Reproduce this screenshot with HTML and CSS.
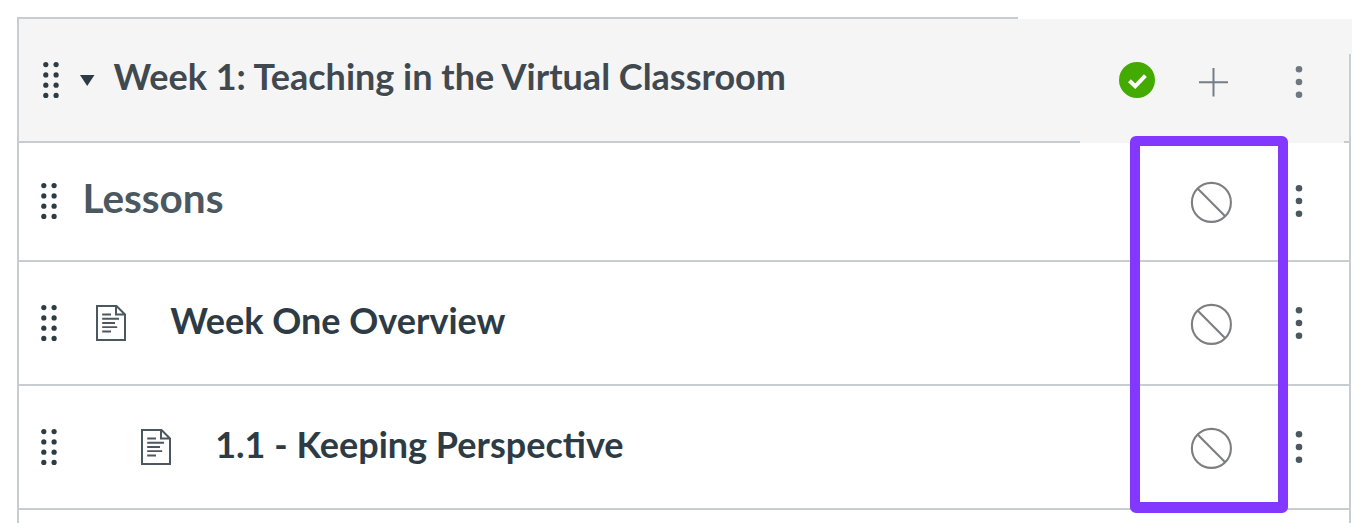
FILE: index.html
```html
<!DOCTYPE html>
<html lang="en">
<head>
<meta charset="utf-8">
<title>Modules</title>
<link rel="stylesheet" href="styles.css">
</head>
<body>
<svg class="defs" aria-hidden="true">
  <symbol id="drag" viewBox="0 0 16 36">
    <g fill="#2d3b45"><circle cx="2.8" cy="2.6" r="2.6"/><circle cx="13.1" cy="2.6" r="2.6"/><circle cx="2.8" cy="12.9" r="2.6"/><circle cx="13.1" cy="12.9" r="2.6"/><circle cx="2.8" cy="23.2" r="2.6"/><circle cx="13.1" cy="23.2" r="2.6"/><circle cx="2.8" cy="33.4" r="2.6"/><circle cx="13.1" cy="33.4" r="2.6"/></g>
  </symbol>
  <symbol id="more" viewBox="0 0 8 34">
    <g fill="currentColor"><circle cx="4" cy="4.2" r="3.3"/><circle cx="4" cy="17" r="3.3"/><circle cx="4" cy="29.7" r="3.3"/></g>
  </symbol>
  <symbol id="page" viewBox="0 0 30 36">
    <path d="M1 1H20.5L29 9.5V35H1ZM20 1V9.5H29" fill="none" stroke="#4b5860" stroke-width="2"/>
    <path d="M6.2 9.5H15M6.2 13.8H23M6.2 18H19M6.2 22.1H21.2M6.2 26.5H15" stroke="#4b5860" stroke-width="1.9"/>
  </symbol>
  <symbol id="unpublished" viewBox="0 0 42 42">
    <g fill="none" stroke="#7d7e80" stroke-width="2.1"><circle cx="21.4" cy="21.4" r="19.5"/><path d="M7.6 7.6L35.2 35.2"/></g>
  </symbol>
</svg>
<main class="module">
  <header class="row header">
    <svg class="drag"><use href="#drag"/></svg>
    <svg class="caret" viewBox="0 0 15 11"><path d="M0 0H14.5L7.2 11Z" fill="#2d3b45"/></svg>
    <h2 class="title">Week 1: Teaching in the Virtual Classroom</h2>
    <svg class="published" viewBox="0 0 36 36"><circle cx="18" cy="18" r="18" fill="#43ab00"/><path d="M10.4 18.8L16.2 24.3L26.4 13.7" fill="none" stroke="#fff" stroke-width="4"/></svg>
    <svg class="plus" viewBox="0 0 29 29"><path d="M0 14.2H29M14.5 0V28.5" stroke="#747e86" stroke-width="2"/></svg>
    <svg class="more"><use href="#more"/></svg>
  </header>
  <section class="row lessons">
    <svg class="drag"><use href="#drag"/></svg>
    <h3 class="title">Lessons</h3>
    <svg class="status"><use href="#unpublished"/></svg>
    <svg class="more"><use href="#more"/></svg>
  </section>
  <section class="row item">
    <svg class="drag"><use href="#drag"/></svg>
    <svg class="page"><use href="#page"/></svg>
    <span class="title">Week One Overview</span>
    <svg class="status"><use href="#unpublished"/></svg>
    <svg class="more"><use href="#more"/></svg>
  </section>
  <section class="row item nested">
    <svg class="drag"><use href="#drag"/></svg>
    <svg class="page"><use href="#page"/></svg>
    <span class="title">1.1 - Keeping Perspective</span>
    <svg class="status"><use href="#unpublished"/></svg>
    <svg class="more"><use href="#more"/></svg>
  </section>
  <div class="next"></div>
  <div class="highlight"></div>
</main>
</body>
</html>
```
FILE: styles.css
```css
* { box-sizing: border-box; }
body { margin: 0; background: #fff; color: #2d3b45; font-family: Lato, sans-serif; overflow: hidden; }
.defs { display: block; width: 0; height: 0; }
svg { flex: none; display: block; }
.module { position: relative; width: 1335px; height: 506px; margin: 17px 0 0 17px; border-left: 2px solid #c7cdd1; }
.row { display: flex; align-items: flex-start; width: 1332px; border-right: 2px solid #c7cdd1; border-bottom: 2px solid #c7cdd1; }
.header {
  width: 1333px; height: 126px; border: 0;
  background:
    linear-gradient(#c7cdd1, #c7cdd1) 0 0 / 999px 2px no-repeat,
    linear-gradient(#fff, #fff) 999px 0 / 334px 2px no-repeat,
    linear-gradient(#c7cdd1, #c7cdd1) 0 124px / 1061px 2px no-repeat,
    linear-gradient(#c7cdd1, #c7cdd1) 1325px 124px / 6px 2px no-repeat,
    linear-gradient(#c7cdd1, #c7cdd1) 1330px 37px / 2px 89px no-repeat,
    linear-gradient(#fff, #fff) 1332px 37px / 1px 89px no-repeat,
    #f5f5f5;
}
.drag { width: 16px; height: 36px; margin: 40px 0 0 22px; }
.more { width: 8px; height: 34px; color: #4b5860; }
.status { width: 42px; height: 42px; margin-right: 63px; }
.title { margin: 0; flex: 1; font-weight: 700; white-space: nowrap; font-size: 36px; line-height: 44px; }
.header .drag { margin: 45px 0 0 24px; }
.caret { width: 15px; height: 11px; margin: 58px 18.6px 0 21px; }
.header .title { color: #414950; text-shadow: 0 1px 0 #fff; margin-top: 37px; }
.published { width: 36px; height: 36px; margin: 45px 44px 0 0; }
.plus { width: 29px; height: 29px; margin: 51px 67px 0 0; }
.header .more { margin: 48px 50px 0 0; color: #6d7880; }
.lessons { height: 119px; }
.lessons .title { font-size: 40.5px; color: #4b5860; margin: 32px 0 0 25.4px; line-height: 46px; }
.lessons .status { margin-top: 38px; }
.row > .more { margin-right: 46px; }
.header > .more { margin-right: 49px; }
.lessons .more { margin-top: 41px; }
.lessons .drag { margin-top: 40px; }
.item { height: 124px; }
.item .drag { margin-top: 43px; }
.item .page { width: 30px; height: 36px; margin: 43px 0 0 39px; }
.item .title { margin: 36px 0 0 44.2px; }
.item .status { margin-top: 41px; }
.item .more { margin-top: 44px; }
.nested .page { margin-left: 84px; }
.next { width: 1332px; height: 13px; border-right: 2px solid #c7cdd1; }
.highlight { position: absolute; left: 1111px; top: 119px; width: 158px; height: 377px; border: 10px solid #8338ff; border-bottom-width: 11px; border-radius: 6px; }
```
